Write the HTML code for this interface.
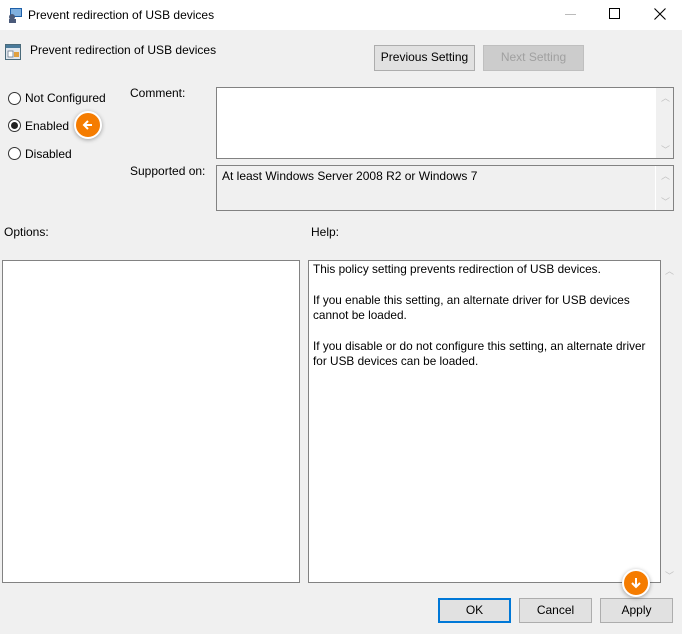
<!DOCTYPE html>
<html><head><meta charset="utf-8"><style>
*{box-sizing:border-box;margin:0;padding:0}
body{width:682px;height:634px;background:#f0f0f0;font-family:"Liberation Sans",sans-serif;font-size:11.5px;color:#000;position:relative;overflow:hidden}
.a{position:absolute;white-space:nowrap}
.title{left:0;top:0;width:682px;height:30px;background:#fff}
.btn{position:absolute;background:#e1e1e1;border:1px solid #adadad;text-align:center;line-height:22px;font-size:12px}
.box{position:absolute;background:#fff;border:1px solid #828282}
.radio{position:absolute;width:13px;height:13px;border:1px solid #333;border-radius:50%;background:#fff}
.oc{position:absolute;width:28px;height:28px;border-radius:50%;background:#f57c00;border:2px solid #fff;box-shadow:0 1px 4px rgba(0,0,0,.35)}
.sb{position:absolute;color:#c0c0c0;font-size:9px}
</style></head><body>
<div class="a title"></div>
<svg class="a" style="left:7px;top:7px" width="16" height="16"><rect x="3" y="1" width="12" height="9" fill="#1d5fa8"/><rect x="4" y="2" width="10" height="7" fill="#7fb0e0"/><circle cx="5" cy="10" r="3" fill="#4a5a7a"/><rect x="2" y="12" width="7" height="4" fill="#4a5a7a"/></svg>
<div class="a" style="left:28px;top:8px;font-size:12px">Prevent redirection of USB devices</div>
<div class="a" style="left:565px;top:14px;width:11px;height:1px;background:#bbb"></div>
<div class="a" style="left:609px;top:8px;width:11px;height:11px;border:1px solid #000"></div>
<svg class="a" style="left:654px;top:8px" width="12" height="12"><path d="M0.5 0.5L11.5 11.5M11.5 0.5L0.5 11.5" stroke="#000" stroke-width="1.1"/></svg>
<svg class="a" style="left:5px;top:44px" width="16" height="16"><rect x="0.5" y="0.5" width="15" height="15" fill="#dfe6ee" stroke="#4a6a7a"/><rect x="1" y="1" width="14" height="3" fill="#4a7a9a"/><rect x="3" y="7" width="5" height="6" fill="#fff" stroke="#6a7a8a" stroke-width=".8"/><rect x="9" y="8" width="5" height="5" fill="#e0a040"/></svg>
<div class="a" style="left:30px;top:43px;font-size:12px">Prevent redirection of USB devices</div>
<div class="btn" style="left:374px;top:45px;width:101px;height:26px">Previous Setting</div>
<div class="btn" style="left:483px;top:45px;width:101px;height:26px;background:#ccc;border-color:#bfbfbf;color:#a0a0a0">Next Setting</div>
<div class="radio" style="left:8px;top:92px"></div>
<div class="a" style="left:25px;top:91px;font-size:12px">Not Configured</div>
<div class="radio" style="left:8px;top:119px"></div><div class="a" style="left:11px;top:122px;width:7px;height:7px;border-radius:50%;background:#222"></div>
<div class="a" style="left:25px;top:119px;font-size:12px">Enabled</div>
<div class="radio" style="left:8px;top:147px"></div>
<div class="a" style="left:25px;top:147px;font-size:12px">Disabled</div>
<div class="oc" style="left:74px;top:111px"></div>
<svg class="a" style="left:81px;top:118px" width="14" height="14"><path d="M11 7H3M7 3L3 7L7 11" stroke="#fff" stroke-width="2" fill="none"/></svg>
<div class="a" style="left:130px;top:86px;font-size:12px">Comment:</div>
<div class="box" style="left:216px;top:87px;width:458px;height:72px"></div>
<div class="a" style="left:656px;top:88px;width:17px;height:70px;background:#f0f0f0"></div>
<div class="sb" style="left:661px;top:91px">︿</div><div class="sb" style="left:661px;top:143px">﹀</div>
<div class="a" style="left:130px;top:164px;font-size:12px">Supported on:</div>
<div class="box" style="left:216px;top:165px;width:458px;height:46px;background:#f0f0f0"></div>
<div class="a" style="left:655px;top:166px;width:1px;height:44px;background:#fff"></div>
<div class="sb" style="left:661px;top:169px">︿</div><div class="sb" style="left:661px;top:195px">﹀</div>
<div class="a" style="left:222px;top:169px;font-size:12px">At least Windows Server 2008 R2 or Windows 7</div>
<div class="a" style="left:4px;top:225px;font-size:12px">Options:</div>
<div class="a" style="left:311px;top:225px;font-size:12px">Help:</div>
<div class="box" style="left:2px;top:260px;width:298px;height:323px"></div>
<div class="box" style="left:308px;top:260px;width:353px;height:323px"></div>
<div class="sb" style="left:665px;top:264px">︿</div><div class="sb" style="left:665px;top:569px">﹀</div>
<div class="a" style="left:313px;top:262px;font-size:11.8px;line-height:15.4px;white-space:normal;width:345px">This policy setting prevents redirection of USB devices.<br><br>If you enable this setting, an alternate driver for USB devices<br>cannot be loaded.<br><br>If you disable or do not configure this setting, an alternate driver<br>for USB devices can be loaded.</div>
<div class="btn" style="left:438px;top:598px;width:73px;height:25px;border:2px solid #0078d7;line-height:21px">OK</div>
<div class="btn" style="left:519px;top:598px;width:73px;height:25px">Cancel</div>
<div class="btn" style="left:600px;top:598px;width:73px;height:25px">Apply</div>
<div class="oc" style="left:622px;top:569px"></div>
<svg class="a" style="left:629px;top:576px" width="14" height="14"><path d="M7 2V11M3 7L7 11L11 7" stroke="#fff" stroke-width="2" fill="none"/></svg>
</body></html>
